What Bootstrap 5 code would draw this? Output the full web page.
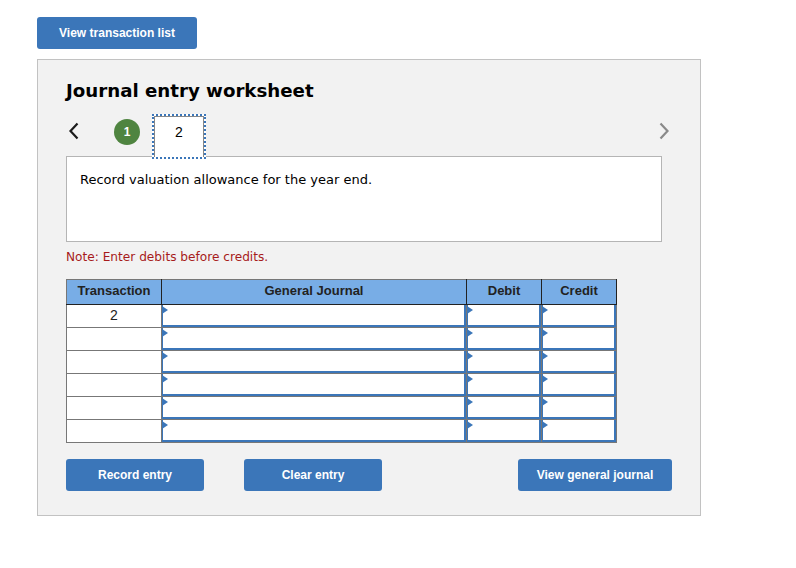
<!DOCTYPE html>
<html lang="en">
<head>
<meta charset="utf-8">
<title>Journal entry worksheet</title>
<link href="https://cdn.jsdelivr.net/npm/bootstrap@5.3.0/dist/css/bootstrap.min.css" rel="stylesheet">
<style>
body{background:#fff;font-family:"DejaVu Sans",sans-serif;color:#000;}
.page-wrap{padding:17px 95px 0 37px;}
.act-btn{background:#3b76b9;border:0;border-radius:3px;color:#fff;font:bold 12px/32px "Liberation Sans",sans-serif;height:32px;padding:0;}
.act-btn:hover,.act-btn:focus{background:#3b76b9;color:#fff;}
.btn-list{width:160px;}
.btn-row{width:138px;}
.btn-gj{width:154px;}
.btn-gap{margin-left:40px;}
.sheet{margin-top:10px;background:#f2f2f2;border:1px solid #c2c2c2;height:457px;padding:19px 28px 0;width:664px;}
.sheet-title{font:bold 18.2px/24px "DejaVu Sans",sans-serif;margin:0;height:24px;}
.step-row{height:42px;margin-top:11px;width:604px;}
.chev{display:block;margin-top:8px;}
.chev-prev{margin-left:2px;}
.step-done{width:26px;height:26px;border-radius:50%;background:#4f8440;color:#fff;font:bold 12px/26px "Liberation Sans",sans-serif;text-align:center;margin:5px 0 0 34px;}
.step-now{position:relative;z-index:1;width:54px;height:45px;margin-left:12px;background:#fff;border:2px dotted #3b76b9;box-shadow:inset 1px 1px 0 #888,inset -1px 0 0 #888;font:14px/32px "Liberation Sans",sans-serif;text-align:center;}
.prompt{background:#fff;border:1px solid #b5b5b5;width:596px;height:86px;padding:14px 13px;font-size:13px;line-height:18px;}
.note-line{color:#a71b1b;font-size:12.15px;line-height:16px;margin:7px 0 14px;}
.jr-table{table-layout:fixed;border-collapse:collapse;width:550px;background:#fff;font-family:"Liberation Sans",sans-serif;margin:0;}
.jr-table th{background:#78ade6;border:1px solid #222;border-top-color:#777;height:25px;padding:0 0 2px;font-size:13px;font-weight:bold;line-height:22px;text-align:center;color:#222;vertical-align:middle;}
.jr-table th:first-child{border-left-color:#777;}
.jr-table td{border:1px solid #777;height:23px;padding:0;font-size:14px;line-height:20px;text-align:center;color:#222;vertical-align:top;}
.jr-table td.cell-in{position:relative;}
.jr-table td.cell-in::before{content:"";position:absolute;left:0;top:1px;border-left:6px solid #3b76b9;border-top:4px solid transparent;border-bottom:4px solid transparent;}
.jr-input{display:block;width:100%;height:22px;padding:0;background:#fff;border:0;border-left:1px solid #3b76b9;border-right:2px solid #3b76b9;border-bottom:2px solid #3b76b9;border-radius:0;outline:0;}
.foot-row{width:606px;margin-top:16px;}
.c1{width:95px}.c2{width:305px}.c3{width:75px}
</style>
</head>
<body>
<div class="page-wrap">
  <button type="button" class="btn act-btn btn-list d-block">View transaction list</button>
  <div class="sheet">
    <h1 class="sheet-title">Journal entry worksheet</h1>
    <div class="step-row d-flex align-items-start">
      <svg class="chev chev-prev" width="12" height="18" viewBox="0 0 12 18"><path d="M9.500 1.500 2.500 9l7 7.500" fill="none" stroke="#1b1b1b" stroke-width="2.200"/></svg>
      <div class="step-done">1</div>
      <div class="step-now">2</div>
      <svg class="chev ms-auto" width="12" height="18" viewBox="0 0 12 18"><path d="M2.500 1.500 9.500 9l-7 7.500" fill="none" stroke="#8a8a8a" stroke-width="2.200"/></svg>
    </div>
    <div class="prompt">Record valuation allowance for the year end.</div>
    <div class="note-line">Note: Enter debits before credits.</div>
    <table class="jr-table">
      <colgroup><col class="c1"><col class="c2"><col class="c3"><col class="c3"></colgroup>
      <thead><tr><th>Transaction</th><th>General Journal</th><th>Debit</th><th>Credit</th></tr></thead>
      <tbody>
        <tr><td>2</td><td class="cell-in"><input class="jr-input" type="text" aria-label="General Journal"></td><td class="cell-in"><input class="jr-input" type="text" aria-label="Debit"></td><td class="cell-in"><input class="jr-input" type="text" aria-label="Credit"></td></tr>
        <tr><td></td><td class="cell-in"><input class="jr-input" type="text" aria-label="General Journal"></td><td class="cell-in"><input class="jr-input" type="text" aria-label="Debit"></td><td class="cell-in"><input class="jr-input" type="text" aria-label="Credit"></td></tr>
        <tr><td></td><td class="cell-in"><input class="jr-input" type="text" aria-label="General Journal"></td><td class="cell-in"><input class="jr-input" type="text" aria-label="Debit"></td><td class="cell-in"><input class="jr-input" type="text" aria-label="Credit"></td></tr>
        <tr><td></td><td class="cell-in"><input class="jr-input" type="text" aria-label="General Journal"></td><td class="cell-in"><input class="jr-input" type="text" aria-label="Debit"></td><td class="cell-in"><input class="jr-input" type="text" aria-label="Credit"></td></tr>
        <tr><td></td><td class="cell-in"><input class="jr-input" type="text" aria-label="General Journal"></td><td class="cell-in"><input class="jr-input" type="text" aria-label="Debit"></td><td class="cell-in"><input class="jr-input" type="text" aria-label="Credit"></td></tr>
        <tr><td></td><td class="cell-in"><input class="jr-input" type="text" aria-label="General Journal"></td><td class="cell-in"><input class="jr-input" type="text" aria-label="Debit"></td><td class="cell-in"><input class="jr-input" type="text" aria-label="Credit"></td></tr>
      </tbody>
    </table>
    <div class="foot-row d-flex">
      <button type="button" class="btn act-btn btn-row">Record entry</button>
      <button type="button" class="btn act-btn btn-row btn-gap">Clear entry</button>
      <button type="button" class="btn act-btn btn-gj ms-auto">View general journal</button>
    </div>
  </div>
</div>
</body>
</html>
